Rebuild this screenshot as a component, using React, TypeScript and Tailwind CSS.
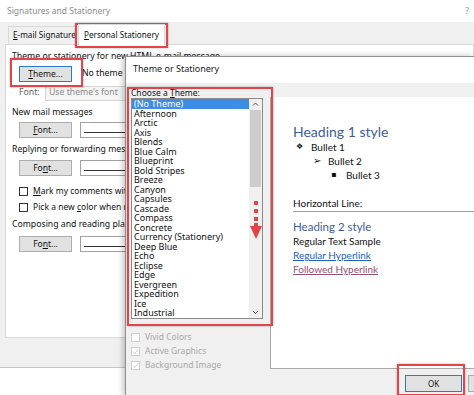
import React from 'react';

const themes = [
  '(No Theme)', 'Afternoon', 'Arctic', 'Axis', 'Blends', 'Blue Calm', 'Blueprint', 'Bold Stripes',
  'Breeze', 'Canyon', 'Capsules', 'Cascade', 'Compass', 'Concrete', 'Currency (Stationery)',
  'Deep Blue', 'Echo', 'Eclipse', 'Edge', 'Evergreen', 'Expedition', 'Ice', 'Industrial',
];

const ui = { fontFamily: '"Noto Sans", "Open Sans", sans-serif' };
const preview = { fontFamily: 'Lato, "Noto Sans", sans-serif' };
const sym = { fontFamily: '"DejaVu Sans", sans-serif' };

// bouton gris style Windows
const Btn = ({ children, focus }: { children: React.ReactNode; focus?: boolean }) => (
  <div
    className={`w-[53px] h-[16px] flex items-center justify-center bg-[#e1e1e1] text-[8.5px] text-[#111] border ${
      focus ? 'border-[#2a78d4]' : 'border-[#adadad]'
    }`}
  >
    {children}
  </div>
);

const FontRow = ({ label }: { label: React.ReactNode }) => (
  <div className="flex items-center gap-[8px] ml-[7px] h-[16px]">
    <Btn>{label}</Btn>
    <div className="flex-1 h-[16px] border border-[#a0a0a0] bg-white flex flex-col">
      <div className="h-[9px]" />
      <div className="h-px bg-[#333] mx-[3px]" />
    </div>
  </div>
);

const Check = ({ children, checked, disabled }: { children: React.ReactNode; checked?: boolean; disabled?: boolean }) => (
  <div className="flex items-center gap-[5px] h-[14px]">
    <div
      className={`w-[9px] h-[9px] border bg-white flex items-center justify-center ${
        disabled ? 'border-[#cfcfcf]' : 'border-[#333]'
      }`}
    >
      {checked && (
        <svg width="7" height="7" viewBox="0 0 7 7">
          <path d="M0.8 3.6 L2.7 5.5 L6.3 1.2" fill="none" stroke="#c4c4c4" strokeWidth="0.9" />
        </svg>
      )}
    </div>
    <span className={`text-[8.5px] ${disabled ? 'text-[#a8a8a8]' : 'text-[#111]'}`}>{children}</span>
  </div>
);

const RedBox = ({ className }: { className: string }) => (
  <div className={`absolute border-2 border-[#e4434a] shadow-[0_0_2px_rgba(0,0,0,0.35)] pointer-events-none ${className}`} />
);

const Bullet = ({ mark, indent, size, children }: { mark: string; indent: string; size: string; children: React.ReactNode }) => (
  <div className={`flex items-center h-[14px] ${indent}`}>
    <span className={`w-[15px] shrink-0 leading-none ${size}`} style={sym}>{mark}</span>
    <span>{children}</span>
  </div>
);

export default function App() {
  return (
    <div className="relative w-[474px] h-[395px] overflow-hidden bg-white" style={ui}>
      {/* fenêtre principale */}
      <div className="absolute left-0 top-0 w-[474px] h-[368px] bg-[#f0f0f0] border-b border-[#c4c4c4] flex flex-col">
        <div className="h-[22px] bg-white flex items-center justify-between pl-[7px] pr-[5px] text-[8.5px] text-[#8c8c8c]">
          <span>Signatures and Stationery</span>
          <span className="text-[#999]">?</span>
        </div>
        <div className="h-[22px] flex items-end pl-[8px] text-[8.2px] text-[#111]">
          <div className="h-[18px] w-[70px] pl-[4px] flex items-center border-t border-l border-[#d9d9d9] whitespace-nowrap">
            <span><u>E</u>-mail Signature</span>
          </div>
          <div className="h-[21px] w-[87px] bg-white flex items-center justify-center border-t border-x border-[#d9d9d9] -mb-px z-10 whitespace-nowrap">
            <span><u>P</u>ersonal Stationery</span>
          </div>
        </div>
        <div className="ml-[5px] h-[294px] bg-white border border-[#d9d9d9] pl-[6px] text-[8.7px] text-[#111] flex flex-col">
          <div className="mt-[6px] leading-[11px]">Theme or stationery for new HTML e-mail message</div>
          <div className="flex items-center gap-[10px] ml-[7px] mt-[4px]">
            <Btn focus><span><u>T</u>heme...</span></Btn>
            <span>No theme currently selected</span>
          </div>
          <div className="flex items-center ml-[7px] mt-[3px] h-[16px]">
            <span className="w-[26px] text-[#666]">Font:</span>
            <div className="flex-1 h-[15px] bg-[#f5f5f5] border border-[#d4d4d4] flex items-center px-[3px] text-[#8a8a8a]">
              Use theme's font
            </div>
          </div>
          <div className="mt-[6px] leading-[11px]">New mail messages</div>
          <div className="mt-[4px]"><FontRow label={<span><u>F</u>ont...</span>} /></div>
          <div className="mt-[6px] leading-[11px]">Replying or forwarding messages</div>
          <div className="mt-[5px]"><FontRow label={<span>Fo<u>n</u>t...</span>} /></div>
          <div className="ml-[7px] mt-[8px] flex flex-col gap-[2px]">
            <Check><u>M</u>ark my comments with:</Check>
            <Check>Pick a new <u>c</u>olor when replying or forwarding</Check>
          </div>
          <div className="mt-[5px] leading-[11px]">Composing and reading plain text messages</div>
          <div className="mt-[6px]"><FontRow label={<span>Fo<u>n</u>t...</span>} /></div>
        </div>
      </div>

      {/* boîte Theme or Stationery */}
      <div className="absolute left-[125px] top-[56px] right-0 bottom-0 bg-[#f0f0f0] border-l border-t border-[#8f8f8f] shadow-[-2px_0_6px_rgba(0,0,0,0.25)] flex flex-col">
        <div className="h-[26px] bg-white flex items-center pb-[3px] pl-[7px] text-[9px] text-[#1a1a1a]">Theme or Stationery</div>
        <div className="flex">
          <div className="w-[144px] pl-[5px] flex flex-col">
            <div className="h-[15px] flex items-end text-[8.5px] text-[#111] leading-[11px]">
              <span>Choose a <u>T</u>heme:</span>
            </div>
            <div className="w-[132px] h-[221px] bg-white border border-[#8a8a8a] flex">
              <div className="flex-1 flex flex-col text-[9px] text-[#111]">
                {themes.map((t, i) => (
                  <div
                    key={t}
                    className={`h-[9.5px] leading-[9.5px] pl-[2px] whitespace-nowrap ${
                      i === 0 ? 'bg-[#3d8de6] text-white' : ''
                    }`}
                  >
                    {t}
                  </div>
                ))}
              </div>
              <div className="w-[13px] bg-[#f0f0f0] flex flex-col items-center">
                <svg width="13" height="11" viewBox="0 0 13 11">
                  <path d="M4 6.5 L6.5 4 L9 6.5" fill="none" stroke="#555" strokeWidth="1" />
                </svg>
                <div className="w-[11px] h-[77px] bg-[#cdcdcd]" />
                <div className="flex-1 w-full relative">
                  <svg className="absolute left-[1px] top-[14px]" width="12" height="40" viewBox="0 0 12 40">
                    <rect x="4" y="0" width="4" height="4" fill="#e4434a" />
                    <rect x="4" y="8" width="4" height="4" fill="#e4434a" />
                    <rect x="4" y="16" width="4" height="4" fill="#e4434a" />
                    <rect x="4" y="22" width="4" height="4" fill="#e4434a" />
                    <polygon points="0,25 12,25 6,38" fill="#e4434a" />
                  </svg>
                </div>
                <svg width="13" height="11" viewBox="0 0 13 11">
                  <path d="M4 4 L6.5 6.5 L9 4" fill="none" stroke="#555" strokeWidth="1" />
                </svg>
              </div>
            </div>
            <div className="mt-[11px] flex flex-col">
              <Check disabled>Vivid Colors</Check>
              <Check disabled checked>Active Graphics</Check>
              <Check disabled checked>Background Image</Check>
            </div>
          </div>
          <div className="flex-1 mt-[14px] h-[272px] bg-white border-l border-b border-[#a8a8a8] pl-[22px] pt-[27px]" style={preview}>
            <div className="text-[14px] leading-[16px] text-[#3f5d98]">Heading 1 style</div>
            <div className="text-[10px] text-[#111]">
              <Bullet mark="❖" indent="ml-[3px]" size="text-[8px]">Bullet 1</Bullet>
              <Bullet mark="➢" indent="ml-[20px]" size="text-[10px]">Bullet 2</Bullet>
              <Bullet mark="▪" indent="ml-[38px]" size="text-[8px]">Bullet 3</Bullet>
            </div>
            <div className="mt-[15px] text-[10px] leading-[12px] text-[#111]">Horizontal Line:</div>
            <div className="h-px bg-[#a0a0a0] mt-[2px]" />
            <div className="mt-[8px] text-[11.5px] leading-[14px] text-[#3f5d98]">Heading 2 style</div>
            <div className="text-[10px] leading-[14px] text-[#111]">Regular Text Sample</div>
            <div className="text-[10px] leading-[14px] text-[#1f5fb8] underline">Regular Hyperlink</div>
            <div className="text-[10px] leading-[14px] text-[#954f72] underline">Followed Hyperlink</div>
          </div>
        </div>
        <div className="flex justify-end gap-[6px] pt-[3px] -mr-[51px]">
          <div className="w-[57px] h-[17px] bg-[#e1e1e1] border border-[#2a78d4] flex items-center justify-center text-[8px] text-[#111]">OK</div>
          <div className="w-[57px] h-[17px] bg-[#e1e1e1] border border-[#adadad]" />
        </div>
      </div>

      <RedBox className="left-[75px] top-[23px] w-[93px] h-[25px]" />
      <RedBox className="left-[10px] top-[58px] w-[73px] h-[29px]" />
      <RedBox className="left-[127px] top-[87px] w-[146px] h-[239px]" />
      <RedBox className="left-[397px] top-[364px] w-[68px] h-[32px]" />
    </div>
  );
}
